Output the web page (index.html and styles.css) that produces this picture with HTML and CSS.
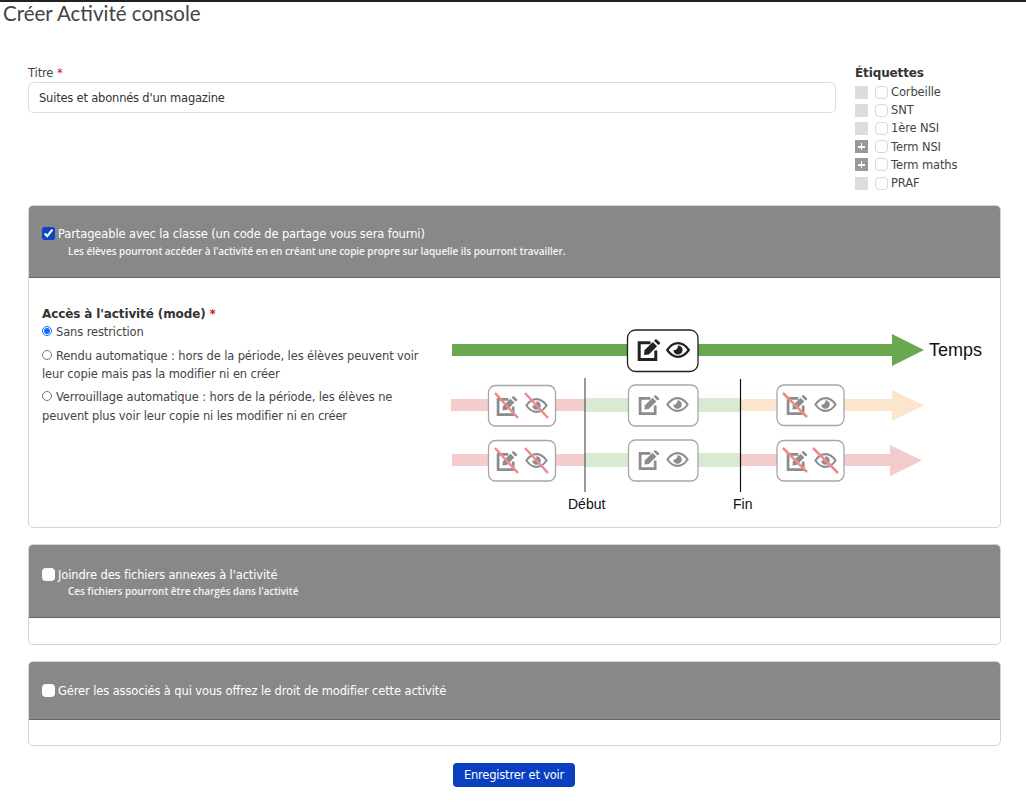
FILE: index.html
```html
<!DOCTYPE html>
<html lang="fr">
<head>
<meta charset="utf-8">
<title>Créer Activité console</title>
<link rel="stylesheet" href="styles.css">
</head>
<body>
<h1 class="page-title">Créer Activité console</h1>
<form class="form">
  <div class="top-row">
    <div class="title-field">
      <label class="field-label" for="titre">Titre <span class="req">*</span></label>
      <input class="text-input" id="titre" type="text" value="Suites et abonnés d'un magazine">
    </div>
    <div class="tags">
      <div class="tags-title">Étiquettes</div>
      <div class="tag"><span class="tag-toggle"></span><input class="check check-tag" type="checkbox"><span>Corbeille</span></div>
      <div class="tag"><span class="tag-toggle"></span><input class="check check-tag" type="checkbox"><span>SNT</span></div>
      <div class="tag"><span class="tag-toggle"></span><input class="check check-tag" type="checkbox"><span>1ère NSI</span></div>
      <div class="tag"><span class="tag-toggle tag-plus"></span><input class="check check-tag" type="checkbox"><span>Term NSI</span></div>
      <div class="tag"><span class="tag-toggle tag-plus"></span><input class="check check-tag" type="checkbox"><span>Term maths</span></div>
      <div class="tag"><span class="tag-toggle"></span><input class="check check-tag" type="checkbox"><span>PRAF</span></div>
    </div>
  </div>

  <section class="card card-share">
    <header class="card-head">
      <label class="head-label"><input class="check-on" type="checkbox" checked>Partageable avec la classe (un code de partage vous sera fourni)</label>
      <div class="head-sub">Les élèves pourront accéder à l'activité en en créant une copie propre sur laquelle ils pourront travailler.</div>
    </header>
    <div class="card-body">
      <div class="modes">
        <div class="modes-title">Accès à l'activité (mode) <span class="req">*</span></div>
        <label class="mode mode-first"><input type="radio" name="mode" checked>Sans restriction</label>
        <label class="mode mode-second"><input type="radio" name="mode">Rendu automatique : hors de la période, les élèves peuvent voir leur copie mais pas la modifier ni en créer</label>
        <label class="mode"><input type="radio" name="mode">Verrouillage automatique : hors de la période, les élèves ne peuvent plus voir leur copie ni les modifier ni en créer</label>
      </div>
      <svg class="diagram" viewBox="0 0 560 200" width="560" height="200" role="img" aria-label="Frise du temps">
        <defs>
          <symbol id="i-edit" viewBox="0 0 24 22">
            <path d="M13.500 3.800H2.200V20.500H18.800V11.500" fill="none" stroke="currentColor" stroke-width="3"/>
            <path d="M7.500 11.200 15.800 2.900 20.100 7.200 11.800 15.500 7 16Z" fill="currentColor"/>
            <path d="M17 1.700 18.400.4Q19 0 19.600.4L23 3.600Q23.400 4.200 23 4.800L21.300 6Z" fill="currentColor"/>
          </symbol>
          <symbol id="i-eye" viewBox="0 0 24 16">
            <path d="M1.200 8Q6 1.200 12 1.200T22.800 8Q18 14.800 12 14.800T1.200 8Z" fill="none" stroke="currentColor" stroke-width="2.200"/>
            <path d="M12 3.400A4.600 4.600 0 1 1 7.400 8Q9.500 8.600 10.800 7T12 3.400Z" fill="currentColor"/>
          </symbol>
        </defs>

        <rect x="12" y="24" width="441" height="12" fill="#6aa84f"/>
        <path d="M452 14 484 30 452 46Z" fill="#6aa84f"/>
        <text class="dia-time" x="489" y="36">Temps</text>

        <rect x="11" y="79" width="134" height="12" fill="#f4cccc"/>
        <rect x="145" y="78" width="155" height="14" fill="#d9ead3"/>
        <rect x="300" y="79" width="153" height="12" fill="#fce5cd"/>
        <path d="M452 70 484 85.500 452 101Z" fill="#fce5cd"/>

        <rect x="12" y="134" width="133" height="12" fill="#f4cccc"/>
        <rect x="145" y="133" width="155" height="14" fill="#d9ead3"/>
        <rect x="300" y="134" width="151" height="12" fill="#f4cccc"/>
        <path d="M450 125 482 140.500 450 156Z" fill="#f4cccc"/>

        <line x1="145" y1="58" x2="145" y2="172" stroke="#555" stroke-width="1.200"/>
        <line x1="300.500" y1="59" x2="300.500" y2="172" stroke="#111" stroke-width="1.200"/>
        <text class="dia-label" x="128" y="189">Début</text>
        <text class="dia-label" x="293" y="189">Fin</text>

        <rect class="box-main" x="187.500" y="10" width="70.500" height="41.500" rx="8"/>
        <use class="ico-main" href="#i-edit" x="197" y="19" width="24" height="22"/>
        <use class="ico-main" href="#i-eye" x="226" y="22" width="24" height="16"/>

        <rect class="box" x="48.500" y="65.500" width="67" height="40.500" rx="7"/>
        <use class="ico" href="#i-edit" x="56" y="76" width="22" height="20"/>
        <use class="ico" href="#i-eye" x="85" y="78" width="23" height="15"/>
        <path class="slash" d="M55 73 78 98M85 73 108 98"/>

        <rect class="box" x="188.500" y="65" width="69.500" height="41" rx="7"/>
        <use class="ico" href="#i-edit" x="198" y="75" width="22" height="20"/>
        <use class="ico" href="#i-eye" x="226" y="77" width="23" height="15"/>

        <rect class="box" x="337" y="65" width="67" height="40.500" rx="7"/>
        <use class="ico" href="#i-edit" x="346" y="75" width="22" height="20"/>
        <use class="ico" href="#i-eye" x="374" y="77" width="23" height="15"/>
        <path class="slash" d="M343 73 367 97"/>

        <rect class="box" x="48.500" y="120.500" width="67" height="40.500" rx="7"/>
        <use class="ico" href="#i-edit" x="56" y="131" width="22" height="20"/>
        <use class="ico" href="#i-eye" x="85" y="133" width="23" height="15"/>
        <path class="slash" d="M55 128 78 153M85 128 108 153"/>

        <rect class="box" x="188.500" y="120" width="69.500" height="41" rx="7"/>
        <use class="ico" href="#i-edit" x="198" y="130" width="22" height="20"/>
        <use class="ico" href="#i-eye" x="226" y="132" width="23" height="15"/>

        <rect class="box" x="337" y="120.500" width="67" height="40.500" rx="7"/>
        <use class="ico" href="#i-edit" x="346" y="131" width="22" height="20"/>
        <use class="ico" href="#i-eye" x="374" y="133" width="23" height="15"/>
        <path class="slash" d="M343 128 367 152M373 128 398 153"/>
      </svg>
    </div>
  </section>

  <section class="card card-files">
    <header class="card-head">
      <label class="head-label"><input class="check check-head" type="checkbox">Joindre des fichiers annexes à l'activité</label>
      <div class="head-sub">Ces fichiers pourront être chargés dans l'activité</div>
    </header>
    <div class="card-empty"></div>
  </section>

  <section class="card card-assoc">
    <header class="card-head">
      <label class="head-label"><input class="check check-head" type="checkbox">Gérer les associés à qui vous offrez le droit de modifier cette activité</label>
    </header>
    <div class="card-empty"></div>
  </section>

  <div class="actions"><button class="btn" type="button">Enregistrer et voir</button></div>
</form>
</body>
</html>
```
FILE: styles.css
```css
* { box-sizing: border-box; }
html, body { margin: 0; padding: 0; }
body {
  border-top: 2px solid #222;
  background: #fff;
  color: #333;
  font-family: "DejaVu Sans", sans-serif;
  font-size: 11.500px;
  letter-spacing: -0.120px;
  line-height: 18px;
  height: 800px;
  overflow: hidden;
}
.page-title {
  margin: 0;
  padding: 0 0 0 3px;
  height: 26px;
  font-family: "Lato", sans-serif;
  font-weight: 400;
  font-size: 20.500px;
  letter-spacing: 0;
  line-height: 23px;
  color: #444;
}
.form { padding: 35px 25px 0 28px; }
.top-row { display: flex; height: 142px; }
.title-field { width: 808px; padding-top: 1px; }
.field-label { display: block; height: 18px; color: #444; }
.req { color: #d0142c; }
.text-input {
  display: block;
  width: 100%;
  height: 31px;
  margin: 0;
  padding: 0 10px;
  border: 1px solid #ddd;
  border-radius: 5px;
  font: inherit;
  letter-spacing: -0.200px;
  color: #333;
  background: #fff;
}
.tags { margin-left: 19px; padding-top: 1px; }
.tags-title { font-weight: 700; font-size: 12px; color: #333; height: 18px; margin-bottom: 1px; }
.tag { display: flex; align-items: center; height: 18.200px; color: #444; }
.tag-toggle {
  position: relative;
  width: 13px;
  height: 13px;
  margin-right: 7px;
  background: #dcdcdc;
}
.tag-plus { background: #999; }
.tag-plus::before, .tag-plus::after { content: ""; position: absolute; background: #fff; }
.tag-plus::before { left: 3px; top: 6px; width: 7px; height: 1.500px; }
.tag-plus::after { left: 5.700px; top: 3px; width: 1.500px; height: 7px; }
.check {
  appearance: none;
  display: block;
  flex: none;
  width: 13px;
  height: 13px;
  margin: 0;
  border-radius: 4px;
  background: #fff;
}
.check-tag { margin-right: 3px; border: 1px solid #d8d8d8; }
.check-head { display: inline-block; vertical-align: -2px; margin-right: 3px; }
.check-on {
  accent-color: #0b45c4;
  width: 13px;
  height: 13px;
  margin: 0 3px 0 0;
  vertical-align: -2px;
}
.card {
  border: 1px solid #d4d4d4;
  border-radius: 5px;
  overflow: hidden;
  background: #fff;
}
.card + .card { margin-top: 16px; }
.card-head {
  background: #888;
  color: #fff;
  padding: 21px 13px 19px;
  border-bottom: 1px solid #666;
}
.card-share .card-head { padding-top: 19px; padding-bottom: 19px; }
.card-share .head-sub { margin-top: 1px; }
.card-assoc .card-head { padding-top: 20px; }
.head-label { display: block; height: 18px; }
.head-sub {
  margin-left: 26px;
  font-family: "Open Sans", sans-serif;
  font-size: 10px;
  font-weight: 600;
  letter-spacing: -0.050px;
  line-height: 14px;
  color: #f4f4f4;
}
.card-body { display: flex; height: 249px; }
.modes { width: 384px; margin-left: 13px; padding-top: 27px; flex: none; color: #444; }
.modes-title { font-weight: 700; font-size: 12px; color: #333; height: 18px; }
.mode { display: block; margin-bottom: 5px; line-height: 18.500px; }
.mode input { width: 10px; height: 10px; margin: 0 4px 0 0; accent-color: #0d6efd; }
.mode-second { margin-bottom: 4.500px; }
.diagram { display: block; flex: none; margin: 42px 0 0 14px; }
.dia-time { font-family: "Liberation Sans", sans-serif; font-size: 18px; letter-spacing: 0; fill: #111; }
.dia-label { font-family: "Liberation Sans", sans-serif; font-size: 14px; letter-spacing: 0; fill: #111; }
.box-main { fill: #fff; stroke: #222; stroke-width: 1.300; }
.box { fill: #fff; stroke: #a6a6a6; stroke-width: 1.300; }
.ico-main { color: #222; }
.ico { color: #8c8c8c; }
.slash { fill: none; stroke: #f08a8a; stroke-width: 2.500; }
.card-empty { height: 25px; }
.card-files .card-empty { height: 26px; }
.actions { display: flex; justify-content: center; margin-top: 17px; padding-right: 1px; }
.btn {
  width: 122px;
  height: 24px;
  padding: 0;
  border: 0;
  border-radius: 4px;
  background: #0a3fc2;
  color: #fff;
  font: inherit;
  letter-spacing: -0.200px;
  line-height: 24px;
}
```
